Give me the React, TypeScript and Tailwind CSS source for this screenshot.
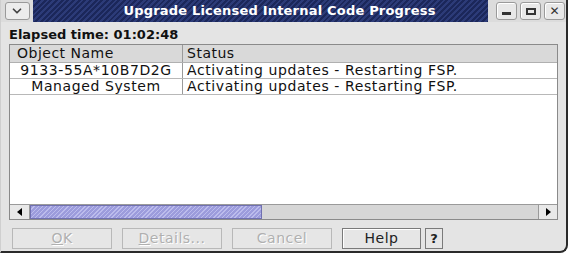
import { ChevronDown } from 'lucide-react';

const rows = [
  { name: '9133-55A*10B7D2G', status: 'Activating updates - Restarting FSP.' },
  { name: 'Managed System', status: 'Activating updates - Restarting FSP.' },
];

const TitleButton = ({ children }: { children: React.ReactNode }) => (
  <div className="w-[21px] h-[18px] border border-[#9a9a9a] rounded-[3px] bg-[#e8e8e8] shadow-[inset_1px_1px_0_#fff] flex items-center justify-center text-[#333]">
    {children}
  </div>
);

const DialogButton = ({
  label,
  mnemonic,
  disabled,
  width,
}: {
  label: string;
  mnemonic?: number;
  disabled?: boolean;
  width: string;
}) => (
  <div
    className={`${width} h-[21px] flex items-center justify-center text-[14px] tracking-[0.5px] border ${
      disabled
        ? 'border-[#b8b8b8] text-[#b0b0b0] [text-shadow:1px_1px_0_#fff]'
        : 'border-[#7a7a7a] text-[#222] shadow-[inset_1px_1px_0_#fff]'
    } bg-[#e6e6e6]`}
  >
    {mnemonic === undefined ? (
      label
    ) : (
      <span>
        {label.slice(0, mnemonic)}
        <span className="underline">{label[mnemonic]}</span>
        {label.slice(mnemonic + 1)}
      </span>
    )}
  </div>
);

export default function App() {
  return (
    <div className="w-[571px] h-[257px] bg-white font-['DejaVu_Sans',sans-serif]">
      <div className="w-[568px] h-[253px] bg-[#e4e4e4] border-l border-[#cfcfcf] border-r-2 border-b-2 border-r-[#2a2a2a] border-b-[#2a2a2a] rounded-br-[8px] flex flex-col overflow-hidden">
        {/* title bar */}
        <div className="h-[22px] flex items-stretch">
          <div className="w-[32px] flex items-center justify-center bg-[#dcdcdc]">
            <div className="w-[25px] h-[18px] border border-[#9a9a9a] rounded-[3px] bg-[#ececec] flex items-center justify-center">
              <ChevronDown size={14} strokeWidth={3} className="text-[#444]" />
            </div>
          </div>
          <div className="flex-1 bg-[repeating-linear-gradient(135deg,#1b275a_0px,#1b275a_2px,#2c3b78_2px,#2c3b78_4px)] flex items-center justify-center">
            <span className="text-white font-bold text-[13px] ml-[38px] tracking-[0.2px]">
              Upgrade Licensed Internal Code Progress
            </span>
          </div>
          <div className="w-[78px] bg-[#dcdcdc] flex items-center gap-[3px] pl-[8px]">
            <TitleButton>
              <div className="w-[9px] h-[3px] bg-[#333] mt-[4px]" />
            </TitleButton>
            <TitleButton>
              <div className="w-[10px] h-[7px] border-2 border-[#333]" />
            </TitleButton>
            <TitleButton>
              <span className="text-[12px] font-bold leading-none">✕</span>
            </TitleButton>
          </div>
        </div>

        <div className="pl-[8px] pt-[3px] h-[22px] text-[13px] font-bold text-[#111]">
          Elapsed time: 01:02:48
        </div>

        {/* table */}
        <div className="ml-[8px] w-[549px] h-[176px] border border-[#8a8a8a] bg-white flex flex-col">
          <div className="h-[18px] flex bg-[#d9d9d9] border-b border-[#b0b0b0] text-[14px] tracking-[0.5px] text-[#111]">
            <div className="w-[173px] pl-[7px] border-r border-[#9a9a9a] leading-[17px]">Object Name</div>
            <div className="flex-1 pl-[4px] leading-[17px]">Status</div>
          </div>
          {rows.map((r) => (
            <div key={r.name} className="h-[16px] flex border-b border-[#b8b8b8] text-[14px] tracking-[0.6px] text-[#111]">
              <div className="w-[173px] text-center border-r border-[#9a9a9a] leading-[15px] whitespace-nowrap">{r.name}</div>
              <div className="flex-1 pl-[4px] leading-[15px] whitespace-nowrap">{r.status}</div>
            </div>
          ))}
          <div className="flex-1" />
          {/* horizontal scrollbar */}
          <div className="h-[15px] flex bg-[#d6d6d6] border-t border-[#9a9a9a]">
            <div className="w-[20px] flex items-center justify-center bg-[#e8e8e8] border-r border-[#9a9a9a]">
              <div className="w-0 h-0 border-y-[4px] border-y-transparent border-r-[5px] border-r-black" />
            </div>
            <div className="w-[232px] bg-[repeating-linear-gradient(135deg,#9c9cdc_0px,#9c9cdc_2px,#bcbcec_2px,#bcbcec_3px)] border border-[#7070b0]" />
            <div className="flex-1" />
            <div className="w-[19px] flex items-center justify-center bg-[#e8e8e8] border-l border-[#9a9a9a]">
              <div className="w-0 h-0 border-y-[4px] border-y-transparent border-l-[5px] border-l-black" />
            </div>
          </div>
        </div>

        {/* buttons */}
        <div className="flex items-center pl-[11px] pt-[8px] gap-[10px]">
          <DialogButton label="OK" mnemonic={0} disabled width="w-[100px]" />
          <DialogButton label="Details..." mnemonic={0} disabled width="w-[100px]" />
          <DialogButton label="Cancel" disabled width="w-[100px]" />
          <div className="flex gap-[4px]">
            <DialogButton label="Help" width="w-[79px]" />
            <div className="w-[18px] h-[21px] flex items-center justify-center text-[13px] font-bold border border-[#7a7a7a] bg-[#e6e6e6] text-[#222]">
              ?
            </div>
          </div>
        </div>
      </div>
    </div>
  );
}
